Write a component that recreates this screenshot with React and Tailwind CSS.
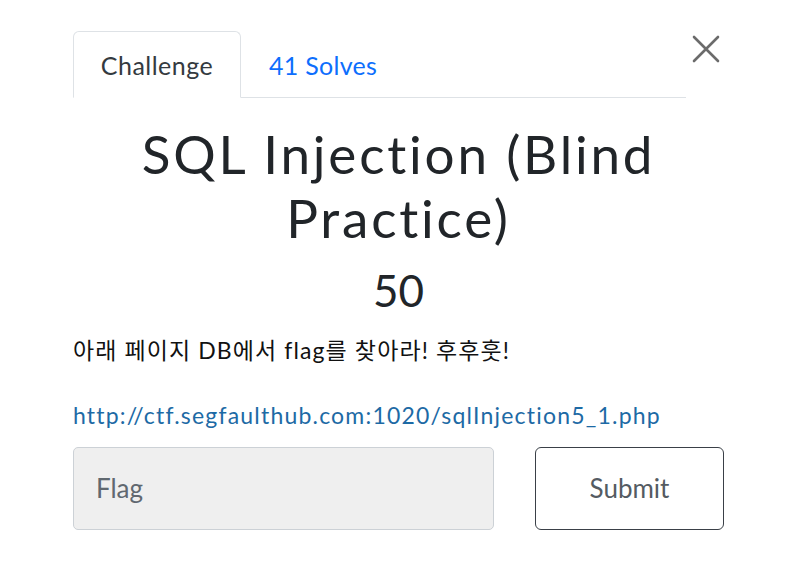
export default function App() {
  return (
    <div className="w-[800px] h-[565px] bg-white overflow-hidden font-['Lato','Noto_Sans_CJK_KR',sans-serif] text-[#212529]">
      <div className="ml-[73px] w-[651px] pt-[31px]">
        <div className="flex items-start">
          <ul className="flex w-[613px] border-b border-[#dee2e6]">
            <li className="-mb-px">
              <span className="block w-[168px] h-[67px] pt-[19px] text-center border border-[#dee2e6] border-b-white rounded-t-[6px] bg-white text-[25px] leading-[29px] tracking-[0.5px] text-[#343a40]">
                Challenge
              </span>
            </li>
            <li>
              <span className="block pl-[28px] pt-[20px] text-[25px] leading-[29px] tracking-[0.3px] text-[#0d6efd]">
                41 Solves
              </span>
            </li>
          </ul>
          <button className="ml-[4px] mt-[4px] w-[32px] h-[28px] flex items-center justify-center">
            <svg width="28" height="28" viewBox="0 0 28 28">
              <path d="M2 2 L26 26 M26 2 L2 26" stroke="#6b6b6b" strokeWidth="2.6" strokeLinecap="round" />
            </svg>
          </button>
        </div>

        <h2 className="mt-[24px] text-center text-[53px] leading-[64px] tracking-[2.8px] text-[#212529]">
          SQL Injection (Blind Practice)
        </h2>
        <h3 className="mt-[14px] text-center text-[44px] leading-[52px]">50</h3>

        <p className="mt-[19px] text-[23px] leading-[30px] tracking-[1.1px] text-[#111]">
          아래 페이지 DB에서 flag를 찾아라! 후후훗!
        </p>
        <p className="mt-[35px] text-[23px] leading-[30px] tracking-[1.2px]">
          <a className="text-[#1d6aa5]">http://ctf.segfaulthub.com:1020/sqlInjection5_1.php</a>
        </p>

        <div className="mt-[17px] flex gap-[41px]">
          <div className="w-[421px] h-[83px] bg-[#efefef] border border-[#ccd1d6] rounded-[5px] flex items-center pl-[22px] text-[26px] text-[#606870]">
            Flag
          </div>
          <button className="flex-1 h-[83px] border border-[#3a4047] rounded-[6px] text-[26px] text-[#545b62]">
            Submit
          </button>
        </div>
      </div>
    </div>
  );
}
